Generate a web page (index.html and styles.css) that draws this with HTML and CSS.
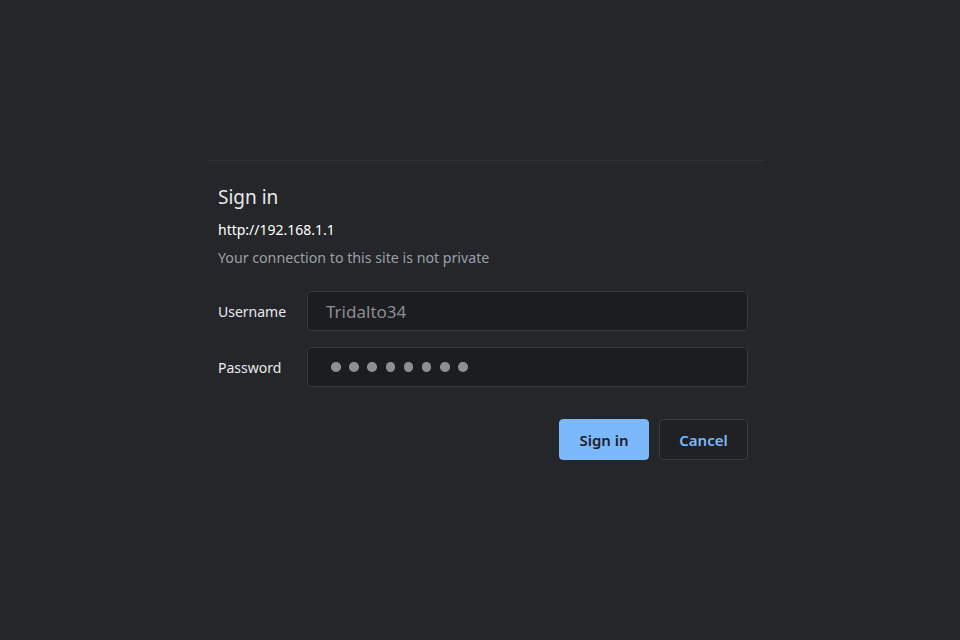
FILE: index.html
```html
<!DOCTYPE html>
<html>
<head>
<meta charset="utf-8">
<link rel="stylesheet" href="styles.css">
</head>
<body>
<div class="dialog">
  <h1 class="title">Sign in</h1>
  <div class="url">http://192.168.1.1</div>
  <div class="note">Your connection to this site is not private</div>
  <div class="form">
    <div class="row">
      <label class="label">Username</label>
      <div class="field"><span class="value">Tridalto34</span></div>
    </div>
    <div class="row">
      <label class="label">Password</label>
      <div class="field"><span class="dots"><i></i><i></i><i></i><i></i><i></i><i></i><i></i><i></i></span></div>
    </div>
  </div>
  <div class="actions">
    <button class="btn primary">Sign in</button>
    <button class="btn secondary">Cancel</button>
  </div>
</div>
</body>
</html>
```
FILE: styles.css
```css
html, body {
  margin: 0;
  height: 100%;
  background: #25262a;
}
body {
  font-family: "Noto Sans", "Open Sans", sans-serif;
  color: #e8eaed;
}
.dialog {
  margin: 160px 0 0 207px;
  width: 530px;
  padding: 0 17px 0 11px;
  border-top: 1px solid #303135;
}
.title {
  margin: 23px 0 0 0;
  font-size: 19px;
  font-weight: 400;
  line-height: 26px;
  color: #e8eaed;
}
.url {
  margin-top: 10px;
  font-size: 14px;
  line-height: 20px;
  color: #ffffff;
}
.note {
  margin-top: 8px;
  font-size: 14.2px;
  line-height: 20px;
  color: #9aa0a6;
}
.form {
  margin-top: 23px;
  display: flex;
  flex-direction: column;
  gap: 16px;
}
.row {
  display: flex;
  align-items: center;
}
.label {
  width: 89px;
  font-size: 14px;
  color: #e8eaed;
}
.field {
  flex: 1;
  height: 38px;
  border: 1px solid #36373b;
  border-radius: 4px;
  background: #1c1d20;
  display: flex;
  align-items: center;
  padding-left: 18px;
}
.value {
  font-size: 17px;
  color: #8c8d90;
}
.dots {
  display: flex;
  gap: 8.7px;
  padding-left: 5px;
}
.dots i {
  width: 9.5px;
  height: 9.5px;
  border-radius: 50%;
  background: #8e8f92;
}
.actions {
  margin-top: 32px;
  display: flex;
  justify-content: flex-end;
  gap: 10px;
}
.btn {
  height: 41px;
  border-radius: 4px;
  font-family: "Noto Sans", "Open Sans", sans-serif;
  font-size: 15px;
  font-weight: 600;
  cursor: pointer;
}
.primary {
  width: 90px;
  background: #7cb9fc;
  border: 1px solid #7cb9fc;
  color: #202124;
}
.secondary {
  width: 89px;
  background: #202124;
  border: 1px solid #3a3b3f;
  color: #7cb9fc;
}
```
